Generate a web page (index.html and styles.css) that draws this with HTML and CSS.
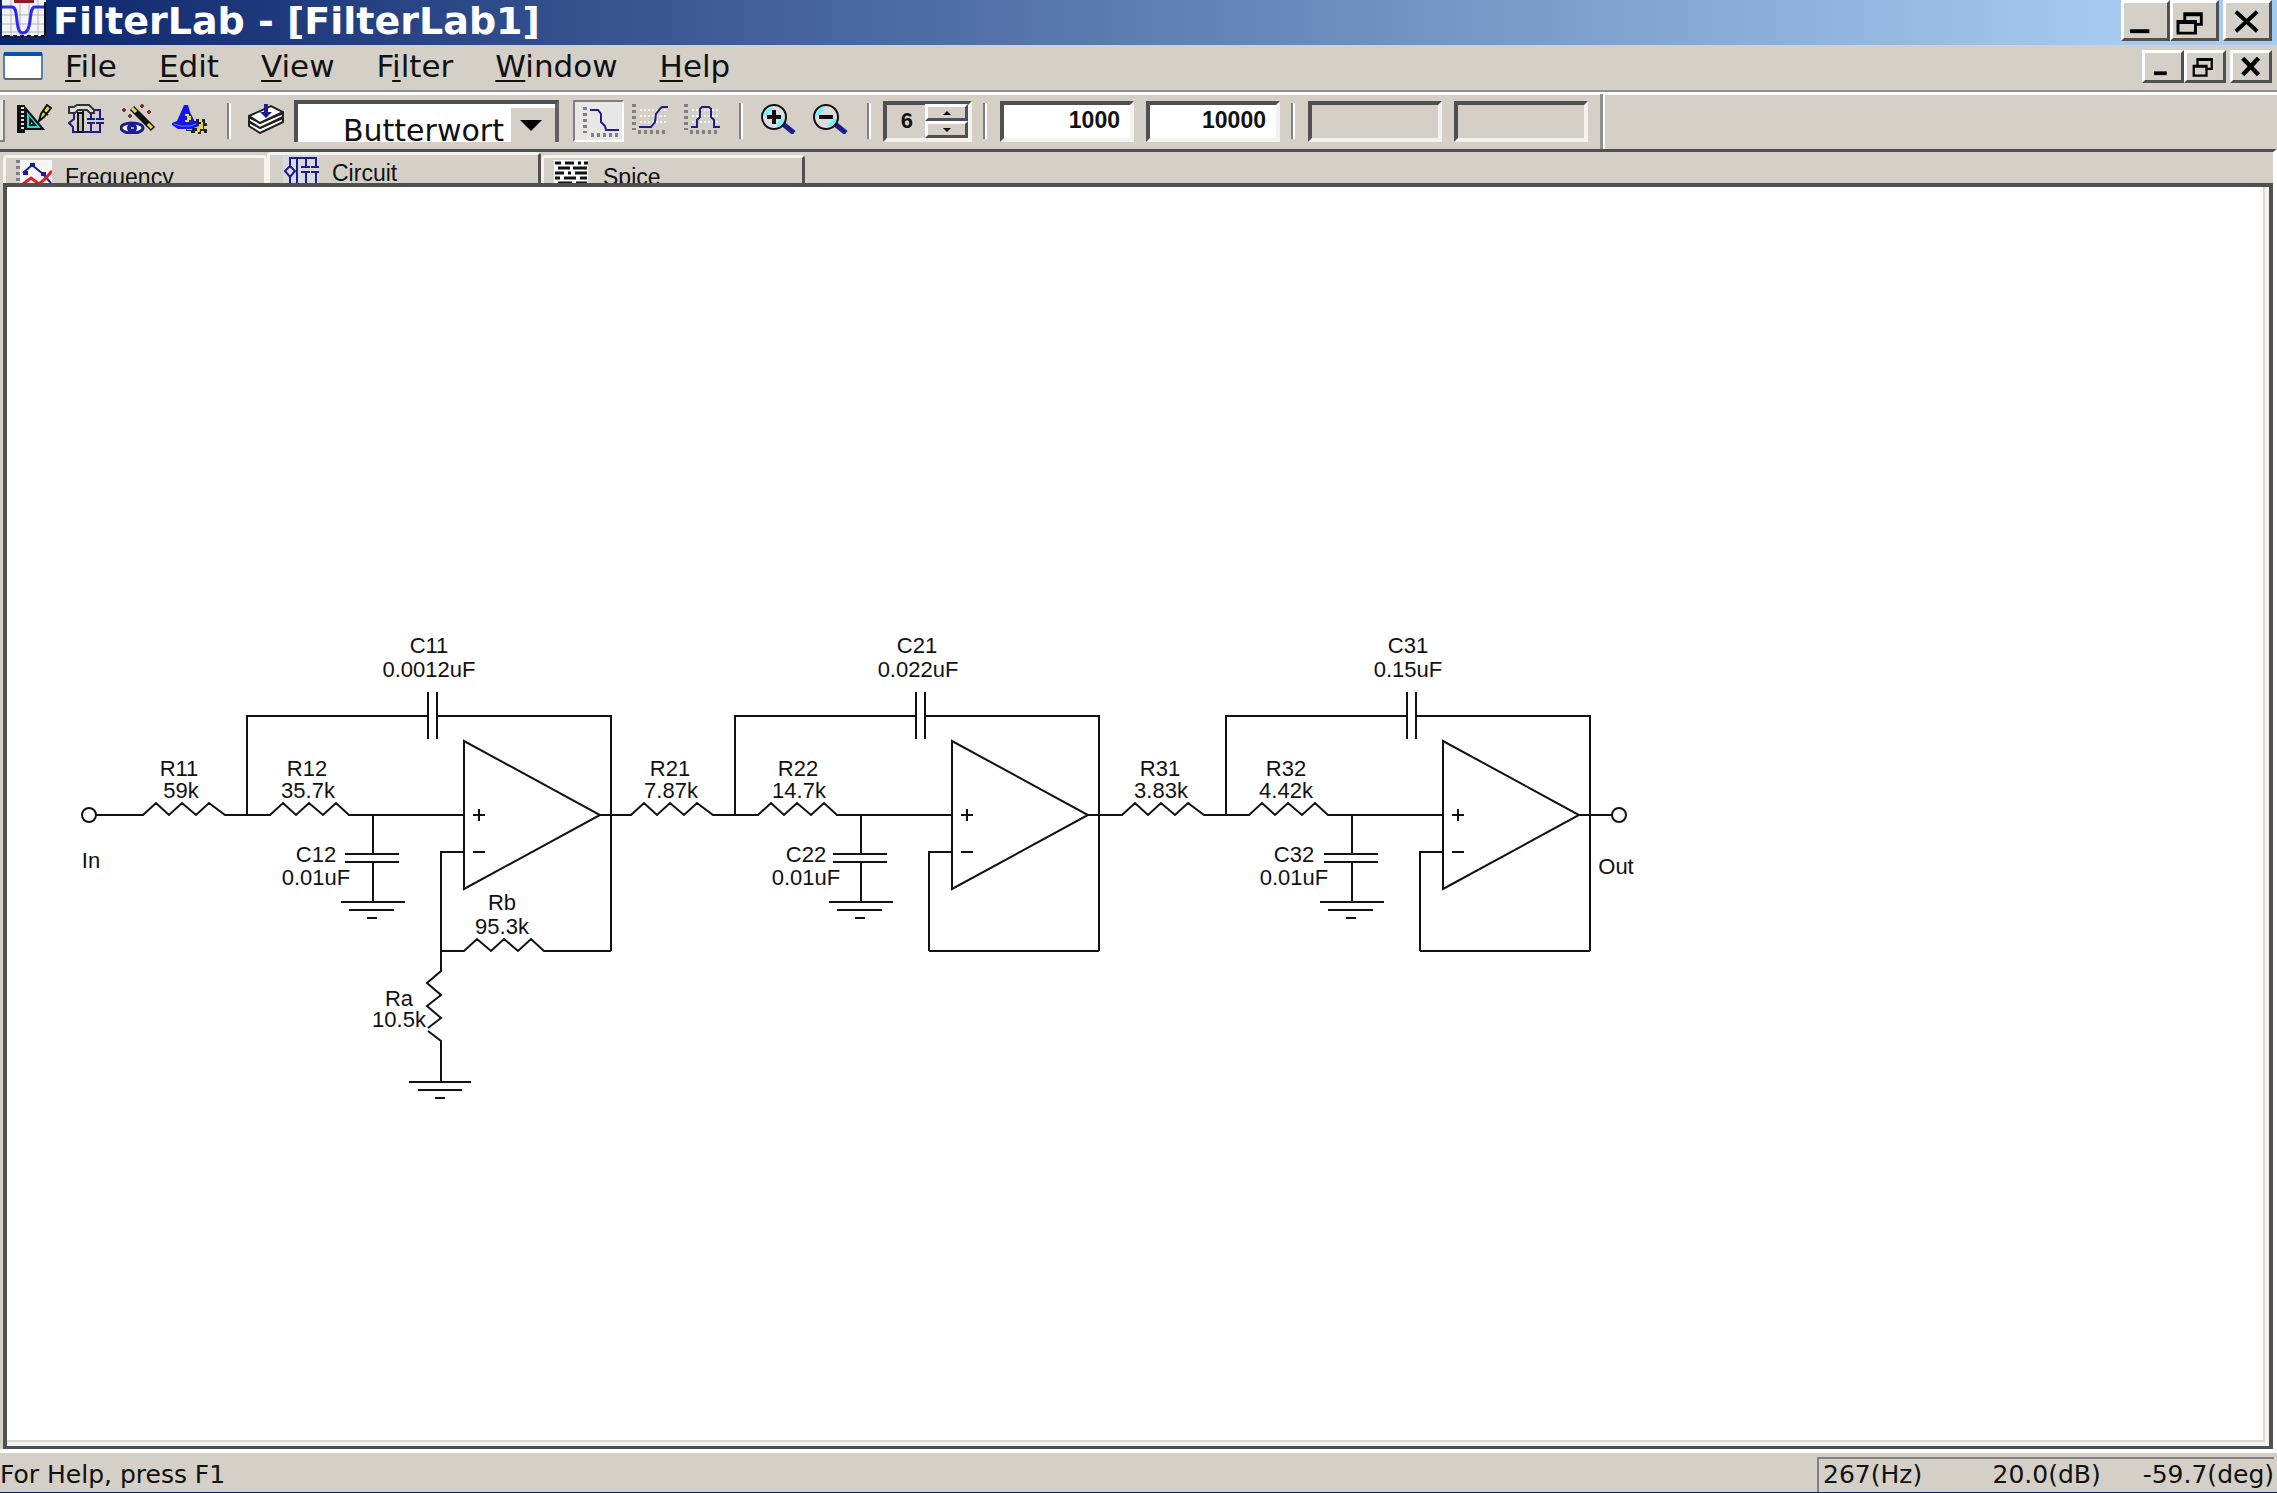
FILE: index.html
```html
<!DOCTYPE html>
<html lang="en">
<head>
  <meta charset="UTF-8" />
  <meta name="viewport" content="width=device-width, initial-scale=1.0" />
  <title>FilterLab - [FilterLab1]</title>
  <link rel="stylesheet" href="styles.css">
</head>
<body>
  <header class="title-bar">
    <svg class="app-icon" viewBox="0 0 44 37">
      <rect width="44" height="36" fill="#f4f4f4"/>
      <path d="M9 0v36M18 0v36M27 0v36M36 0v36M0 15h44M0 24h44M0 32h44" stroke="#b4b4b4"/>
      <path d="M12 1h20" stroke="#8a1c24" stroke-width="4"/>
      <path d="M0 7h10c4 0 4 6 5 14s2 12 6 12 6-4 7-12 1-14 5-14h11" fill="none" stroke="#2a2af0" stroke-width="3"/>
      <path d="M43 2v34H2" fill="none" stroke="#111" stroke-width="2" stroke-dasharray="34 0 4 3 4 3 4 3 4 3 4 3"/>
    </svg>
    <h1>FilterLab - [FilterLab1]</h1>
    <div class="window-buttons">
      <button aria-label="Minimize"><svg viewBox="0 0 44 36"><path d="M6 29h20" stroke="#000" stroke-width="4"/></svg></button>
      <button aria-label="Restore"><svg viewBox="0 0 44 36"><path d="M12 18v-7h17v11h-6M11 12h19" fill="none" stroke="#000" stroke-width="3"/><path d="M5 19h18v12H5zM4 20h20" fill="none" stroke="#000" stroke-width="3"/></svg></button>
      <button class="close" aria-label="Close"><svg viewBox="0 0 44 36"><path d="M10 9l22 20M32 9L10 29" stroke="#000" stroke-width="4"/></svg></button>
    </div>
  </header>

  <nav class="menu-bar">
    <svg class="doc-icon" viewBox="0 0 40 28">
      <rect x="1" y="1" width="38" height="26" rx="2" fill="#fff" stroke="#5b7fae" stroke-width="2"/>
      <path d="M1 2h38" stroke="#0a52b0" stroke-width="4"/>
      <path d="M2 27h37" stroke="#666" stroke-width="2"/>
    </svg>
    <div class="menus">
      <button><u>F</u>ile</button>
      <button><u>E</u>dit</button>
      <button><u>V</u>iew</button>
      <button>F<u>i</u>lter</button>
      <button><u>W</u>indow</button>
      <button><u>H</u>elp</button>
    </div>
    <div class="window-buttons small">
      <button aria-label="Minimize document"><svg viewBox="0 0 44 36"><path d="M10 27h17" stroke="#000" stroke-width="5"/></svg></button>
      <button aria-label="Restore document"><svg viewBox="0 0 44 36"><path d="M12 17V8h19v13h-8M11 9h21" fill="none" stroke="#000" stroke-width="3"/><path d="M7 17h17v13H7zM6 18h19" fill="none" stroke="#000" stroke-width="3"/></svg></button>
      <button class="close" aria-label="Close document"><svg viewBox="0 0 44 36"><path d="M11 7l21 22M32 7L11 29" stroke="#000" stroke-width="6"/></svg></button>
    </div>
  </nav>

  <div class="toolbar">
    <span class="handle"></span>
    <button class="tool" aria-label="Filter design">
      <svg viewBox="0 0 36 30">
        <path d="M1 1h8v28H1z" fill="#111"/>
        <path d="M5 4h3M5 8h3M5 12h3M5 16h3M5 20h3M5 24h3" stroke="#ddd" stroke-width="2"/>
        <path d="M10 5l17 20H10z" fill="#1fd8d8" stroke="#111" stroke-width="2"/>
        <path d="M14 15l5 6h-5z" fill="#d4d0c8" stroke="#111" stroke-width="2"/>
        <path d="M23 17l2-7 6-9 4 3-7 9z" fill="#e8e040" stroke="#111" stroke-width="2"/>
        <path d="M27 7l5 4" stroke="#111" stroke-width="2"/>
      </svg>
    </button>
    <button class="tool" aria-label="Build circuit">
      <svg viewBox="0 0 36 30">
        <path d="M8 28H5v-5l-4-4 5-4V6h26v9M32 19v9H8M15 6v22M23 6v9M23 20v8M19 15h8M19 19h8M28 15h8M28 19h8" fill="none" stroke="#1c1c90" stroke-width="2"/>
        <path d="M1 3h5l3-2h12l5 5v3h-4l-3-3h-9l-3 3H1z" fill="#ddd" stroke="#333" stroke-width="2"/>
        <path d="M10 9h5v19h-5z" fill="#bbb" stroke="#111" stroke-width="2"/>
      </svg>
    </button>
    <button class="tool" aria-label="Filter wizard">
      <svg viewBox="0 0 36 30">
        <path d="M12 4l21 21" stroke="#111" stroke-width="6"/>
        <path d="M12 4l4 4M28 20l4 4" stroke="#e8e040" stroke-width="3"/>
        <path d="M2 6h4M4 4v4M8 12h4M10 10v4M20 2h4M22 0v4M27 8h4M29 6v4" stroke="#7b3040" stroke-width="2"/>
        <ellipse cx="12" cy="24" rx="11" ry="5" fill="#fff" stroke="#1c1c90" stroke-width="3"/>
        <circle cx="12" cy="24" r="5" fill="#1c1c90"/><path d="M11 24h3" stroke="#7af" stroke-width="2"/>
      </svg>
    </button>
    <button class="tool" aria-label="Anti-aliasing wizard">
      <svg viewBox="0 0 36 30">
        <path d="M22 17h2v-2h3v3h3v-3h3v4h2v3h-3v3h3v4h-3v-2h-3v3h-3v-3h-3v2h-4v-2h-5v-4l8-3z" fill="#222"/>
        <path d="M21 20h8v-2h2v7h-3v3h-3v-4h-5v2h-5v-2h4z" fill="#e8d820"/>
        <path d="M12 1h4l2 7 5 10 4 2v2l-8 3H6l-6-4v-2l5-2 4-9z" fill="#1414f0"/>
        <path d="M13 11h3v2h2v2h-2v2h-3" fill="none" stroke="#e8e040" stroke-width="2"/>
        <path d="M2 20l7 2h9l6-2" fill="none" stroke="#5a90ff"/>
      </svg>
    </button>
    <span class="separator"></span>
    <button class="tool" aria-label="Overlay">
      <svg viewBox="0 0 36 30">
        <path d="M1 22l11 7 23-11v-4L12 24 1 18z" fill="#fff" stroke="#222" stroke-width="2"/>
        <path d="M1 17l11 7 23-11V9L12 19 1 13z" fill="#fff" stroke="#222" stroke-width="2"/>
        <path d="M1 12L23 2l12 6-23 11z" fill="#fff" stroke="#222" stroke-width="2"/>
        <path d="M16 0h4v8h4l-6 6-6-6h4z" fill="#1c1c90"/>
      </svg>
    </button>
    <div class="combo">
      <select aria-label="Approximation">
        <option>Butterwort</option>
      </select>
      <span class="combo-arrow"></span>
    </div>
    <button class="tool pressed" aria-label="Low pass">
      <svg viewBox="0 0 36 30">
        <path class="axis" d="M2 0v26M8 28h28"/>
        <path class="curve" d="M7 3h8l3 4v8l4 4 1 4h13"/>
      </svg>
    </button>
    <button class="tool" aria-label="High pass">
      <svg viewBox="0 0 36 30">
        <path class="dots" d="M8 6h26M8 12h26M8 18h26"/>
        <path class="axis" d="M2 0v26M6 28h30"/>
        <path class="curve" d="M7 23h12l4-5 1-8 4-5 2-2h6"/>
      </svg>
    </button>
    <button class="tool" aria-label="Band pass">
      <svg viewBox="0 0 36 30">
        <path class="dots" d="M8 6h26M8 12h26M8 18h26"/>
        <path class="axis" d="M2 0v26M6 28h30"/>
        <path class="curve" d="M7 23h6v-7l3-3V5l2-2h7l2 2v8l3 3v7h6"/>
      </svg>
    </button>
    <span class="separator"></span>
    <button class="tool" aria-label="Zoom in">
      <svg viewBox="0 0 36 30">
        <path d="M23 20l11 9" stroke="#1c1c90" stroke-width="5"/>
        <circle cx="14" cy="13" r="12" fill="#ddd" stroke="#111" stroke-width="2"/>
        <path d="M5 11l6-7M17 22l6-7" stroke="#5ff" stroke-width="3"/>
        <path d="M7 13h14M14 6v14" stroke="#111" stroke-width="4"/>
      </svg>
    </button>
    <button class="tool" aria-label="Zoom out">
      <svg viewBox="0 0 36 30">
        <path d="M23 20l11 9" stroke="#1c1c90" stroke-width="5"/>
        <circle cx="14" cy="13" r="12" fill="#ddd" stroke="#111" stroke-width="2"/>
        <path d="M5 11l6-7M17 22l6-7" stroke="#5ff" stroke-width="3"/>
        <path d="M7 13h14" stroke="#111" stroke-width="4"/>
      </svg>
    </button>
    <span class="separator"></span>
    <div class="spinner">
      <input type="text" value="6" aria-label="Filter order">
      <div class="spin-buttons">
        <button aria-label="Increase order"><svg viewBox="0 0 8 4"><path d="M0 4l4-4 4 4z"/></svg></button>
        <button aria-label="Decrease order"><svg viewBox="0 0 8 4"><path d="M0 0l4 4 4-4z"/></svg></button>
      </div>
    </div>
    <span class="separator"></span>
    <input class="field" type="text" value="1000" aria-label="Passband frequency">
    <input class="field" type="text" value="10000" aria-label="Stopband frequency">
    <span class="separator"></span>
    <input class="field" type="text" disabled aria-label="Upper passband frequency">
    <input class="field" type="text" disabled aria-label="Upper stopband frequency">
    <span class="toolbar-end"></span>
  </div>

  <main class="workspace">
    <div class="tabs" role="tablist">
      <button class="tab" role="tab">
        <svg viewBox="0 0 36 30">
          <rect x="4" width="32" height="30" fill="#f6f6f6"/>
          <path class="axis" d="M2 0v30"/>
          <path class="dots" d="M6 4h30M6 10h30M6 16h30"/>
          <path d="M7 13l9-8 11 9 8 9" fill="none" stroke="#1c1c90" stroke-width="2"/>
          <path d="M7 11h5v4H7zM14 3h5v4h-5zM25 12h5v4h-5z" fill="#1c1c90"/>
          <path d="M7 24l8-6 8 6 6-5 7-8" fill="none" stroke="#e02020" stroke-width="3"/>
        </svg>
        <span>Frequency</span>
      </button>
      <button class="tab active" role="tab" aria-selected="true">
        <svg viewBox="0 0 36 30">
          <rect width="36" height="30" fill="#d8dae0"/>
          <path d="M7 30v-9M7 10V2h26v9M33 17v13M14 2v28M23 2v9M23 16v14M18 11h9M18 16h9M28 11h8M28 16h8M7 10l5 5-5 6-5-6z" fill="none" stroke="#1c1c90" stroke-width="2"/>
        </svg>
        <span>Circuit</span>
      </button>
      <button class="tab" role="tab">
        <svg viewBox="0 0 36 30">
          <rect width="34" height="30" fill="#fff"/>
          <path d="M1 3h6M11 3h9M24 3h3M30 3h4M4 8h12M19 8h14M1 13h9M14 13h3M21 13h12M1 18h5M10 18h12M26 18h7M4 23h14M22 23h11" stroke="#111" stroke-width="3"/>
        </svg>
        <span>Spice</span>
      </button>
    </div>

    <section class="canvas">
      <svg class="schematic" viewBox="7 187 1640 940">
        <defs>
          <!-- Sallen-Key section: two resistors, two capacitors, op amp -->
          <g id="section">
            <path d="M112 815h31l13-12 13 12 13-12 14 12 13-12 16 12h45l13-12 13 12 13-12 14 12 13-12 13 12h115"/>
            <path d="M247 815v-99h181M428 692v47M437 692v47M437 716h174v235"/>
            <path d="M373 815v39M345 854h54M345 862h54M373 862v40M341 902h64M349 910h45M367 918h10"/>
            <path d="M464 741v148l136-74zM600 815h11M473 815h12M479 809v12M473 852h12"/>
            <path d="M464 852h-23v99"/>
          </g>
        </defs>
        <g class="wires">
          <circle cx="89" cy="815" r="7"/>
          <path d="M96 815h16"/>
          <use href="#section"/>
          <use href="#section" x="488"/>
          <use href="#section" x="979"/>
          <path d="M441 951h23l13-12 14 12 13-12 14 12 13-12 13 12h67"/>
          <path d="M441 951v20l-14 12 14 12-14 11 14 12-13 10M428 1031l13 10v41M409 1082h62M418 1090h44M435 1098h10"/>
          <path d="M929 951h170M1420 951h170M1590 815h22"/>
          <circle cx="1619" cy="815" r="7"/>
        </g>
        <g class="labels">
          <text x="91" y="868">In</text>
          <text x="179" y="776">R11</text><text x="181" y="798">59k</text>
          <text x="307" y="776">R12</text><text x="308" y="798">35.7k</text>
          <text x="429" y="653">C11</text><text x="429" y="677">0.0012uF</text>
          <text x="316" y="862">C12</text><text x="316" y="885">0.01uF</text>
          <text x="502" y="910">Rb</text><text x="502" y="934">95.3k</text>
          <text x="399" y="1006">Ra</text><text x="399" y="1027">10.5k</text>
          <text x="670" y="776">R21</text><text x="671" y="798">7.87k</text>
          <text x="798" y="776">R22</text><text x="799" y="798">14.7k</text>
          <text x="917" y="653">C21</text><text x="918" y="677">0.022uF</text>
          <text x="806" y="862">C22</text><text x="806" y="885">0.01uF</text>
          <text x="1160" y="776">R31</text><text x="1161" y="798">3.83k</text>
          <text x="1286" y="776">R32</text><text x="1286" y="798">4.42k</text>
          <text x="1408" y="653">C31</text><text x="1408" y="677">0.15uF</text>
          <text x="1294" y="862">C32</text><text x="1294" y="885">0.01uF</text>
          <text x="1616" y="874">Out</text>
        </g>
      </svg>
    </section>
  </main>

  <footer class="status-bar">
    <span>For Help, press F1</span>
    <div class="readout">
      <span>267(Hz)</span>
      <span class="gain">20.0(dB)</span>
      <span>-59.7(deg)</span>
    </div>
  </footer>
</body>
</html>
```
FILE: styles.css
```css
* {
  box-sizing: border-box;
}
body {
  margin: 0;
  min-height: 100vh;
  display: flex;
  flex-direction: column;
  background: #d4d0c8;
  color: #111;
  font-family: "DejaVu Sans", sans-serif;
}
button {
  font: inherit;
  color: inherit;
  background: none;
  border: 0;
  padding: 0;
}
svg {
  display: block;
}

/* title bar */
.title-bar {
  display: flex;
  align-items: flex-start;
  height: 45px;
  padding: 0 5px 0 2px;
  background: linear-gradient(to right, #0a246a 0%, #a6caf0 93%);
}
.app-icon {
  width: 44px;
  height: 37px;
}
.title-bar h1 {
  flex: 1;
  margin: 0 0 0 7px;
  font-size: 38px;
  line-height: 42px;
  font-weight: bold;
  color: #fff;
  white-space: nowrap;
}
.window-buttons {
  display: flex;
}
.window-buttons button {
  width: 49px;
  height: 41px;
  background: #d4d0c8;
  border: 3px solid;
  border-color: #fff #505050 #505050 #fff;
}
.window-buttons svg {
  width: 100%;
  height: 100%;
}
.window-buttons .close {
  margin-left: 4px;
}
.window-buttons.small button {
  width: 42px;
  height: 33px;
}

/* menu bar */
.menu-bar {
  display: flex;
  align-items: center;
  height: 47px;
  padding: 0 5px 3px 3px;
  border-bottom: 2px solid #909090;
}
.doc-icon {
  width: 40px;
  height: 28px;
}
.menus {
  flex: 1;
  display: flex;
  gap: 42px;
  margin-left: 22px;
  font-size: 31px;
  line-height: 36px;
}
.menus u {
  text-decoration-thickness: 2px;
  text-underline-offset: 3px;
}

/* toolbar */
.toolbar {
  display: flex;
  align-items: center;
  height: 57px;
  padding-bottom: 2px;
  border-top: 3px solid #fff;
}
.handle {
  width: 5px;
  height: 42px;
  margin-right: 3px;
  background: #ece9e4;
  border-right: 2px solid #808080;
  border-bottom: 2px solid #808080;
}
.tool {
  width: 52px;
  height: 42px;
  padding: 4px 8px 8px;
}
.tool svg {
  width: 36px;
  height: 30px;
}
.tool.pressed {
  width: 51px;
  margin-left: 14px;
  padding: 5px 5px 3px 8px;
  background: #e9e7e3;
  border: 2px solid;
  border-color: #808080 #fff #fff #808080;
}
.axis {
  fill: none;
  stroke: #808080;
  stroke-width: 4;
  stroke-dasharray: 3 3;
}
.dots {
  fill: none;
  stroke: #f4f4f4;
  stroke-width: 2;
  stroke-dasharray: 2 2;
}
.curve {
  fill: none;
  stroke: #1c1c90;
  stroke-width: 2;
}
.separator {
  width: 4px;
  height: 36px;
  margin: 0 9px 0 11px;
  border-left: 2px solid #808080;
  border-right: 2px solid #fff;
}
.combo {
  display: flex;
  position: relative;
  width: 265px;
  height: 42px;
  margin-left: 2px;
  border: 4px solid #505050;
  border-right-color: #606060;
  border-bottom: 0;
  background: #fff;
}
.combo select {
  appearance: none;
  width: 100%;
  height: 38px;
  padding: 9px 0 0 45px;
  border: 0;
  background: none;
  color: inherit;
  font: 30px/36px "DejaVu Sans", sans-serif;
}
.combo-arrow {
  position: absolute;
  top: 2px;
  right: 0;
  bottom: 0;
  width: 46px;
  padding-right: 4px;
  display: flex;
  align-items: center;
  justify-content: center;
  background: #d4d0c8;
  border-top: 2px solid #fff;
  border-left: 2px solid #fff;
  pointer-events: none;
}
.combo-arrow::after {
  content: "";
  border: 11px solid transparent;
  border-top-color: #000;
  border-bottom: 0;
}
.spinner {
  display: flex;
  align-items: center;
  width: 89px;
  height: 41px;
  margin-left: 3px;
  border: 4px solid;
  border-color: #505050 #f4f2ee #f4f2ee #505050;
}
.spinner input {
  width: 38px;
  padding: 0 12px 0 0;
  border: 0;
  background: none;
  color: #111;
  font: bold 22px/26px "Liberation Sans", sans-serif;
  text-align: right;
}
.spin-buttons {
  flex: 1;
}
.spin-buttons button {
  display: flex;
  align-items: center;
  justify-content: center;
  width: 100%;
  height: 17px;
  border: 3px solid;
  border-color: #fff #505050 #505050 #fff;
}
.spin-buttons svg {
  width: 8px;
  height: 4px;
}
.field {
  width: 134px;
  height: 41px;
  margin-left: 4px;
  padding: 0 10px 1px;
  border: 4px solid;
  border-color: #505050 #f4f2ee #f4f2ee #505050;
  border-radius: 0;
  background: #fff;
  color: #111;
  font: bold 23px/26px "Liberation Sans", sans-serif;
  text-align: right;
}
.field + .field {
  margin-left: 12px;
}
.field:disabled {
  background: #d4d0c8;
}
.toolbar-end {
  width: 5px;
  height: 56px;
  margin: 0 0 -2px 12px;
  border-left: 3px solid #909090;
  border-right: 2px solid #fff;
}

/* tabs and drawing area */
.workspace {
  flex: 1;
  display: flex;
  flex-direction: column;
  padding-left: 3px;
  border-top: 3px solid #505050;
  border-right: 4px solid #fff;
}
.tabs {
  display: flex;
  align-items: flex-end;
  height: 31px;
  overflow: hidden;
}
.tab {
  display: flex;
  align-items: flex-start;
  gap: 13px;
  width: 264px;
  height: 28px;
  padding: 2px 0 0 10px;
  border-top: 3px solid #f4f2ee;
  border-left: 3px solid #f4f2ee;
  border-right: 3px solid #f4f2ee;
  border-radius: 4px 4px 0 0;
  font: 23px/26px "Liberation Sans", sans-serif;
}
.tab svg {
  width: 36px;
  height: 30px;
  flex: none;
}
.tab span {
  padding-top: 4px;
}
.tab.active {
  width: 274px;
  height: 31px;
  padding: 1px 0 0 13px;
}
.tab.active,
.tab:last-child {
  border-right-color: #505050;
}
.canvas {
  flex: 1;
  background: #fff;
  border: 4px solid #505050;
  border-bottom-width: 3px;
  box-shadow: inset -4px -4px 0 #f4f2ee, inset -6px -6px 0 #dcd9d2;
}
.schematic {
  width: 1640px;
  height: 940px;
}
.wires {
  fill: none;
  stroke: #111;
  stroke-width: 2;
}
.labels {
  fill: #111;
  font: 22px "Liberation Sans", sans-serif;
  text-anchor: middle;
}

/* status bar */
.status-bar {
  display: flex;
  justify-content: space-between;
  height: 44px;
  padding: 4px 3px 0 0;
  border-top: 4px solid #fff;
  border-bottom: 1px solid #0a246a;
  font-size: 25px;
  line-height: 36px;
  white-space: nowrap;
}
.readout {
  display: flex;
  width: 457px;
  padding-left: 4px;
  border-top: 2px solid #808080;
  border-left: 2px solid #808080;
  line-height: 32px;
}
.readout .gain {
  margin: 0 42px 0 auto;
}
```
